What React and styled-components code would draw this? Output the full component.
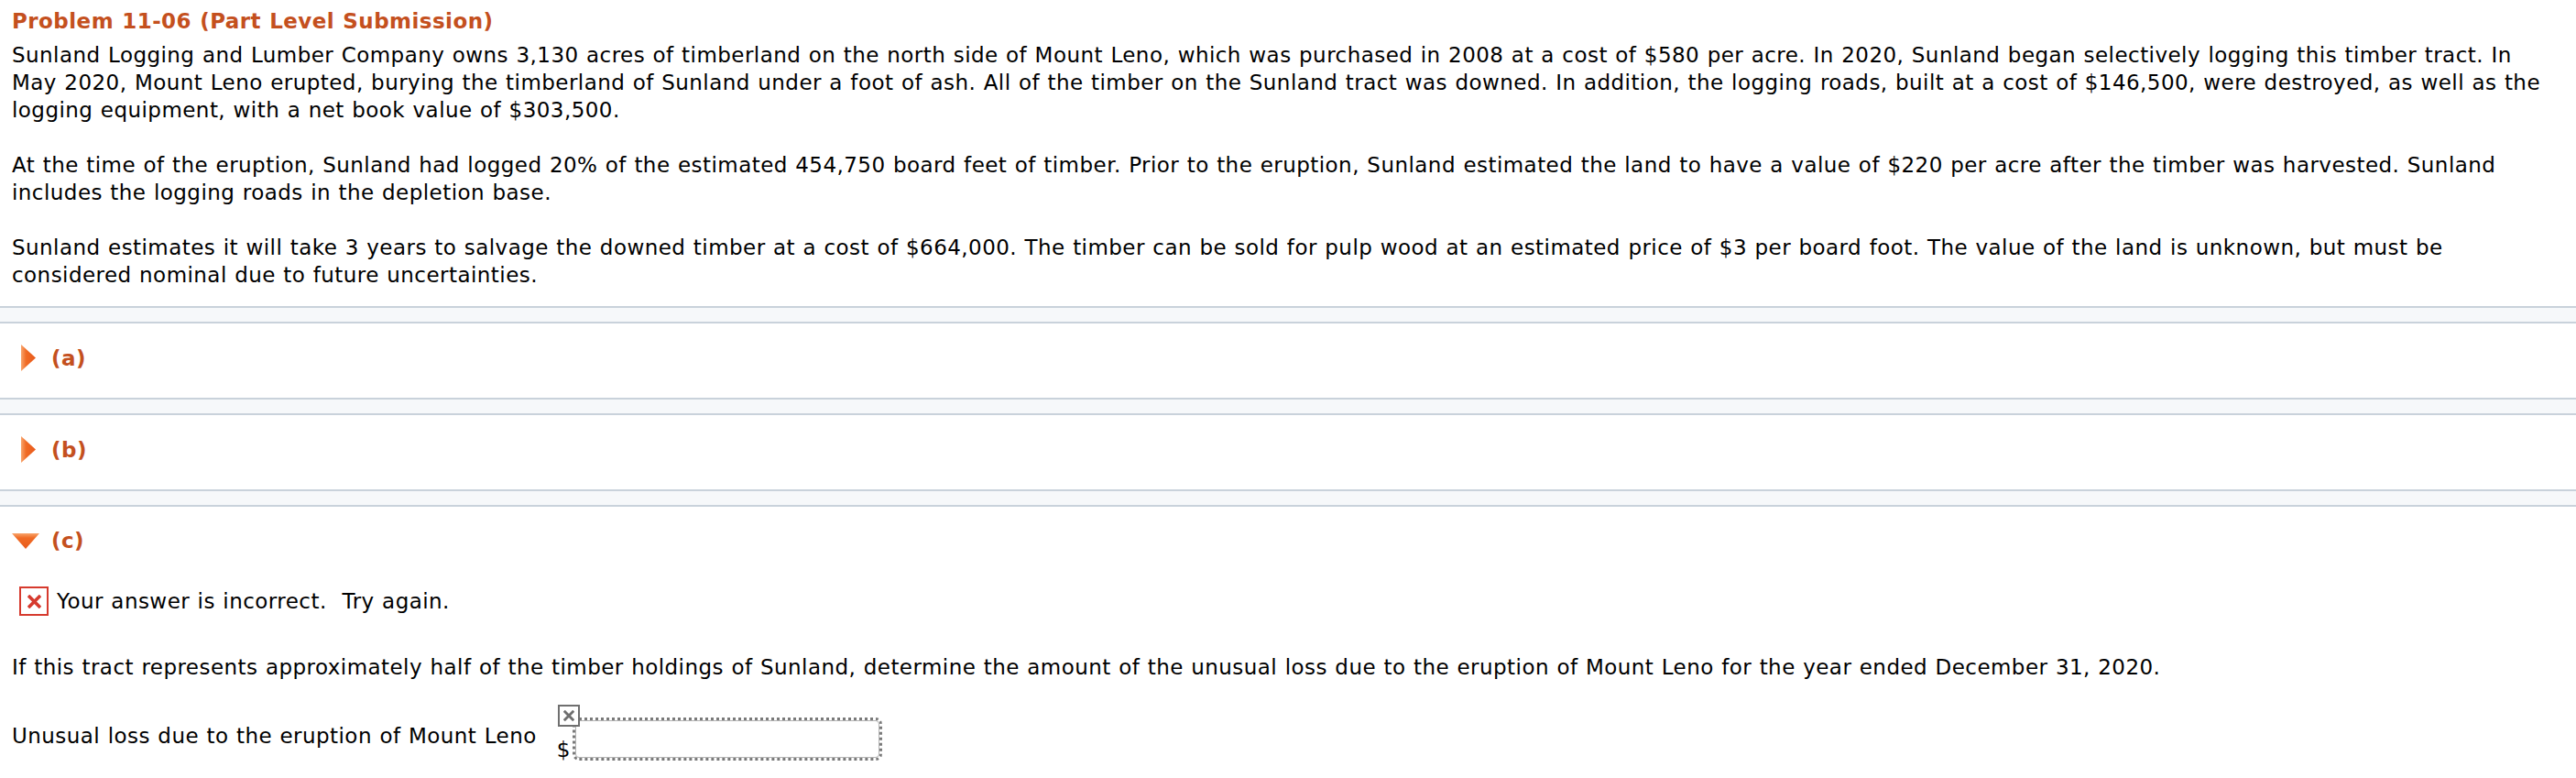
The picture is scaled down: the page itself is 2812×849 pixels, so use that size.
import React from 'react';
import styled, { createGlobalStyle } from 'styled-components';

const GlobalStyle = createGlobalStyle`
  html, body {
    margin: 0;
    padding: 0;
    background: #ffffff;
  }
  body {
    font-family: "DejaVu Sans", Verdana, sans-serif;
    font-size: 23px;
    line-height: 30px;
    letter-spacing: 0.45px;
    word-spacing: 0.7px;
    color: #000000;
  }
`;

const Page = styled.div`
  width: 2812px;
`;

const Intro = styled.div`
  padding: 8px 22px 19px 13px;
`;

const Title = styled.div`
  font-weight: bold;
  color: #c4501e;
  margin-bottom: 7px;
`;

const Paragraph = styled.p`
  margin: 0 0 30px;
  &:last-child {
    margin-bottom: 0;
  }
`;

const Band = styled.div`
  height: 15px;
  background: #f6f8fa;
  border-top: 2px solid #c9d2db;
  border-bottom: 2px solid #c9d2db;
`;

const PartHeader = styled.div`
  display: flex;
  align-items: center;
  box-sizing: border-box;
  height: ${p => p.$height}px;
  padding-left: ${p => (p.$open ? 13 : 23)}px;
  padding-bottom: ${p => (p.$open ? 0 : 6)}px;
  gap: ${p => (p.$open ? 13 : 17)}px;
`;

const PartLabel = styled.span`
  font-weight: bold;
  color: #c4501e;
`;

const PartBody = styled.div`
  padding: 0 13px 20px;
`;

const Feedback = styled.div`
  display: flex;
  align-items: center;
  gap: 9px;
  margin-top: 13px;
  padding-left: 8px;
  white-space: pre;
`;

const WrongBox = styled.span`
  display: inline-flex;
  align-items: center;
  justify-content: center;
  width: 28px;
  height: 28px;
  border: 2px solid #d63a2e;
  background: #ffffff;
`;

const Question = styled.p`
  margin: 41px 0 0;
`;

const AnswerRow = styled.div`
  display: flex;
  align-items: center;
  gap: 22px;
  margin-top: 26px;
`;

const AnswerLabel = styled.span`
  padding-top: 6px;
`;

const AnswerCell = styled.div`
  position: relative;
  display: flex;
  align-items: flex-end;
  padding-top: 14px;
`;

const Dollar = styled.span`
  line-height: 24px;
  margin-right: 2px;
`;

const AmountInput = styled.input`
  box-sizing: border-box;
  width: 332px;
  height: 41px;
  margin: 3px;
  border: 1px solid #b4b4b4;
  border-radius: 4px;
  outline: 3px dotted #7a7a7a;
  outline-offset: 0;
  background: #ffffff;
  font-family: inherit;
  font-size: inherit;
`;

const ClearBadge = styled.span`
  position: absolute;
  top: 0;
  left: 1px;
  box-sizing: border-box;
  width: 24px;
  height: 24px;
  border: 2px solid #6f6f6f;
  background: #ffffff;
  display: flex;
  align-items: center;
  justify-content: center;
`;

const RightArrow = () => (
  <svg width="16" height="29" viewBox="0 0 16 29">
    <defs>
      <linearGradient id="ra" x1="0" y1="0" x2="1" y2="0">
        <stop offset="0" stopColor="#f8a46b" />
        <stop offset="0.35" stopColor="#f06b25" />
        <stop offset="1" stopColor="#e85a1c" />
      </linearGradient>
    </defs>
    <polygon points="0,0 16,14.5 0,29" fill="url(#ra)" />
  </svg>
);

const DownArrow = () => (
  <svg width="30" height="17" viewBox="0 0 30 17">
    <defs>
      <linearGradient id="da" x1="0" y1="0" x2="0" y2="1">
        <stop offset="0" stopColor="#f8a46b" />
        <stop offset="0.3" stopColor="#f06b25" />
        <stop offset="1" stopColor="#e85a1c" />
      </linearGradient>
    </defs>
    <polygon points="0,0 30,0 15,17" fill="url(#da)" />
  </svg>
);

const Cross = ({ size, color, width }) => (
  <svg width={size} height={size} viewBox="0 0 10 10">
    <path d="M1.5 1.5 L8.5 8.5 M8.5 1.5 L1.5 8.5" stroke={color} strokeWidth={width} strokeLinecap="square" />
  </svg>
);

const parts = [
  { key: 'a', label: '(a)' },
  { key: 'b', label: '(b)' },
];

export default function App() {
  return (
    <Page>
      <GlobalStyle />
      <Intro>
        <Title>Problem 11-06 (Part Level Submission)</Title>
        <Paragraph>
          Sunland Logging and Lumber Company owns 3,130 acres of timberland on the north side of Mount Leno, which was purchased in 2008 at a cost of $580 per acre. In 2020, Sunland began selectively logging this timber tract. In May 2020, Mount Leno erupted, burying the timberland of Sunland under a foot of ash. All of the timber on the Sunland tract was downed. In addition, the logging roads, built at a cost of $146,500, were destroyed, as well as the logging equipment, with a net book value of $303,500.
        </Paragraph>
        <Paragraph>
          At the time of the eruption, Sunland had logged 20% of the estimated 454,750 board feet of timber. Prior to the eruption, Sunland estimated the land to have a value of $220 per acre after the timber was harvested. Sunland includes the logging roads in the depletion base.
        </Paragraph>
        <Paragraph>
          Sunland estimates it will take 3 years to salvage the downed timber at a cost of $664,000. The timber can be sold for pulp wood at an estimated price of $3 per board foot. The value of the land is unknown, but must be considered nominal due to future uncertainties.
        </Paragraph>
      </Intro>

      {parts.map(part => (
        <React.Fragment key={part.key}>
          <Band />
          <PartHeader $height={81}>
            <RightArrow />
            <PartLabel>{part.label}</PartLabel>
          </PartHeader>
        </React.Fragment>
      ))}

      <Band />
      <PartHeader $height={74} $open>
        <DownArrow />
        <PartLabel>(c)</PartLabel>
      </PartHeader>
      <PartBody>
        <Feedback>
          <WrongBox>
            <Cross size={15} color="#d63a2e" width={2.4} />
          </WrongBox>
          <span>Your answer is incorrect.  Try again.</span>
        </Feedback>
        <Question>
          If this tract represents approximately half of the timber holdings of Sunland, determine the amount of the unusual loss due to the eruption of Mount Leno for the year ended December 31, 2020.
        </Question>
        <AnswerRow>
          <AnswerLabel>Unusual loss due to the eruption of Mount Leno</AnswerLabel>
          <AnswerCell>
            <ClearBadge>
              <Cross size={12} color="#6f6f6f" width={2.4} />
            </ClearBadge>
            <Dollar>$</Dollar>
            <AmountInput type="text" />
          </AnswerCell>
        </AnswerRow>
      </PartBody>
    </Page>
  );
}
